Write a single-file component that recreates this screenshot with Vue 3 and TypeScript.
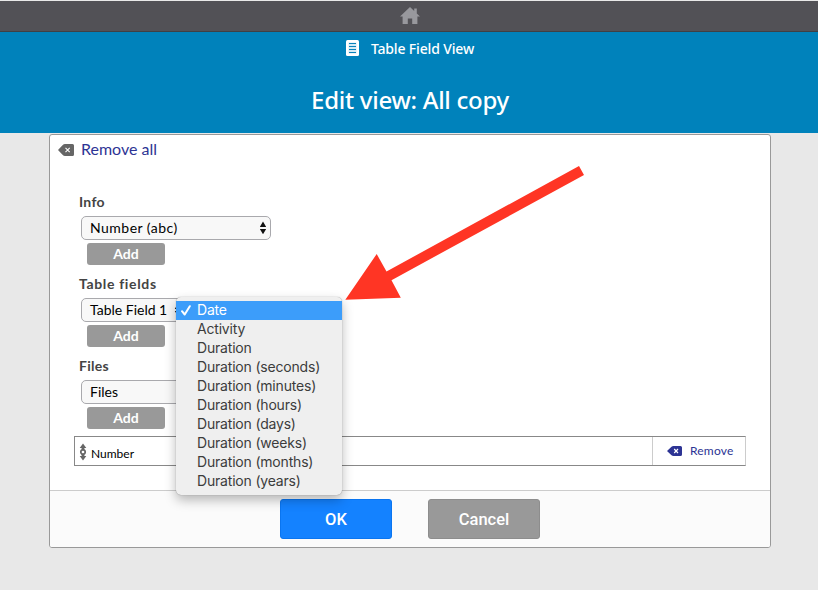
<script setup lang="ts">
interface FieldGroup {
  label: string
  value: string
  cls: string
}

const groups: FieldGroup[] = [
  { label: 'Info', value: 'Number (abc)', cls: 'info' },
  { label: 'Table fields', value: 'Table Field 1', cls: 'table' },
  { label: 'Files', value: 'Files', cls: 'files' },
]

const options: string[] = [
  'Date',
  'Activity',
  'Duration',
  'Duration (seconds)',
  'Duration (minutes)',
  'Duration (hours)',
  'Duration (days)',
  'Duration (weeks)',
  'Duration (months)',
  'Duration (years)',
]
const selected = 'Date'
</script>

<template>
  <div class="page">
    <div class="topbar">
      <svg class="home" width="20" height="18" viewBox="0 0 20 18">
        <path d="M10 0 0 9.6h2.6V17h5.2v-5.6h4.4V17h5.2V9.6H20l-3.2-3.1V1.6h-2.6v2.5z" fill="#98989d" />
      </svg>
    </div>
    <header class="header">
      <div class="app">
        <svg width="13" height="16" viewBox="0 0 13 16">
          <rect width="13" height="16" rx="1.5" fill="#fff" />
          <path d="M2.5 2.5h8v11h-8z" fill="#d5ebf5" />
          <path d="M3 3.5h7M3 6.5h7M3 9.5h7M3 12.5h7" stroke="#0982bb" stroke-width="1.2" />
        </svg>
        <span>Table Field View</span>
      </div>
      <h1>Edit view: All copy</h1>
    </header>

    <main class="dialog">
      <div class="content">
        <div class="remove-all">
          <svg width="16" height="12" viewBox="0 0 16 12">
            <path d="M0 6 5 .8Q5.7 0 7 0h7.500Q16 0 16 1.500v9Q16 12 14.500 12H7q-1.300 0-2-.8z" fill="#666" />
            <path d="m7.500 3.900 4.200 4.200m0-4.200L7.500 8.100" stroke="#fff" stroke-width="1.100" />
          </svg>
          <span>Remove all</span>
        </div>
        <section v-for="g in groups" :key="g.label" class="group" :class="g.cls">
          <div class="label"><span>{{ g.label }}</span></div>
          <div class="select">
            <span>{{ g.value }}</span>
            <svg width="8" height="14" viewBox="0 0 8 14">
              <path d="M4 .6 7.200 6H.8zM4 13.200.8 8h6.400z" fill="#111" />
            </svg>
          </div>
          <button class="add"><span>Add</span></button>
        </section>
        <div class="row">
          <div class="row-name">
            <svg width="8" height="18" viewBox="0 0 8 18">
              <path d="M4 .5 7.300 5H.7zM4 17.500.7 13h6.600z" fill="#666" />
              <circle cx="4" cy="9" r="2.200" fill="none" stroke="#666" stroke-width="1.700" />
              <path d="M4 4v3m0 4v3" stroke="#666" stroke-width="2.800" />
            </svg>
            <span>Number</span>
          </div>
          <div class="row-action">
            <svg width="15" height="10" viewBox="0 0 15 10">
              <path d="M0 5 4.500.7Q5.200 0 6.500 0h7Q15 0 15 1.500v7Q15 10 13.500 10h-7q-1.300 0-2-.7z" fill="#2d3494" />
              <path d="m7.200 3 3.800 4m0-4L7.200 7" stroke="#fff" stroke-width="1.200" />
            </svg>
            <span>Remove</span>
          </div>
        </div>
      </div>
      <footer class="footer">
        <button class="ok"><span>OK</span></button>
        <button class="cancel"><span>Cancel</span></button>
      </footer>
    </main>

    <ul class="menu">
      <li v-for="o in options" :key="o" :class="{ active: o === selected }">
        <svg v-if="o === selected" class="check" width="10" height="11" viewBox="0 0 10 11">
          <path d="m1 6.200 2.700 3.300L8.800 1.200" fill="none" stroke="#fff" stroke-width="2" stroke-linecap="round" stroke-linejoin="round" />
        </svg>
        <span>{{ o }}</span>
      </li>
    </ul>

    <svg class="arrow" width="240" height="136" viewBox="345 165 240 136">
      <path d="M345.300 299.800 376.700 254l9.800 17.500L579 166l5 9-192.500 105.200 9.300 17.600z" fill="#ff3524" />
    </svg>
  </div>
</template>

<style>
body {
  margin: 0;
}
</style>

<style scoped>
.page {
  position: relative;
  box-sizing: border-box;
  width: 818px;
  height: 590px;
  overflow: hidden;
  background: #e8e8e8;
  font-family: Lato, sans-serif;
}
.page * {
  box-sizing: border-box;
}
svg {
  display: block;
  flex: none;
}
span {
  white-space: nowrap;
}
.topbar {
  display: flex;
  justify-content: center;
  height: 32px;
  padding-top: 6px;
  padding-left: 2px;
  border-top: 1px solid #e9e9e9;
  border-bottom: 1px solid #3f4045;
  background: #525156;
}
.header {
  display: flex;
  flex-direction: column;
  align-items: center;
  height: 101px;
  padding-top: 6px;
  background: #0082bb;
  color: #fff;
  font-family: "Noto Sans", sans-serif;
}
.app {
  display: flex;
  align-items: center;
  gap: 12px;
  height: 20px;
  padding-left: 2px;
  font-size: 14px;
  font-weight: 500;
  letter-spacing: -0.15px;
}
h1 {
  margin: 25px 0 0 2px;
  font-size: 24px;
  line-height: 34px;
  font-weight: 500;
  letter-spacing: -0.28px;
}
.dialog {
  display: flex;
  flex-direction: column;
  width: 722px;
  height: 414px;
  margin: 1px 0 0 49px;
  border: 1px solid #999;
  border-radius: 3px;
  background: #fff;
  overflow: hidden;
}
.content {
  height: 355px;
  padding-left: 24px;
}
.content span {
  padding-bottom: 2px;
}
.remove-all {
  display: flex;
  align-items: center;
  gap: 7px;
  height: 30px;
  margin-left: -16px;
  color: #2d3494;
  font-size: 16px;
}
.remove-all span {
  margin-top: -1px;
}
.group {
  height: 82px;
  padding-left: 5px;
}
.info {
  margin-top: 27px;
}
.label {
  height: 24px;
  line-height: 19px;
  color: #444;
  font-size: 14px;
  font-weight: 700;
  letter-spacing: 0.3px;
}
.table .label {
  letter-spacing: 0.65px;
}
.select {
  display: flex;
  align-items: center;
  justify-content: space-between;
  width: 190px;
  height: 24px;
  margin-left: 2px;
  padding: 0 3px 0 8px;
  border: 1px solid #a9a9ad;
  border-radius: 5px;
  background: #f8f8f8;
  color: #000;
  font-size: 14px;
}
.info .select {
  letter-spacing: 0.48px;
}
.table .select {
  width: 105px;
}
button {
  display: flex;
  align-items: center;
  justify-content: center;
  padding: 0;
  border: 0;
  color: #fff;
  font-family: inherit;
  font-weight: 700;
}
.add {
  width: 78px;
  height: 22px;
  margin: 3px 0 0 8px;
  border-radius: 3px;
  background: #999;
  font-size: 14px;
}
.row {
  display: flex;
  width: 672px;
  height: 30px;
  margin-top: -2px;
  border: 1px solid #888;
  border-right-color: #ccc;
  font-size: 12px;
}
.row-name {
  display: flex;
  align-items: center;
  gap: 4px;
  width: 577px;
  padding: 6px 0 0 4px;
}
.row-name svg {
  margin-top: -4px;
}
.row-name span {
  padding-bottom: 1px;
}
.row-action {
  display: flex;
  align-items: center;
  gap: 8px;
  flex: 1;
  padding-left: 14px;
  border-left: 1px solid #ccc;
  color: #2d3494;
}
.row-action span {
  padding-bottom: 2px;
  letter-spacing: 0.2px;
}
.footer {
  display: flex;
  justify-content: center;
  gap: 36px;
  flex: 1;
  padding-top: 8px;
  border-top: 1px solid #ccc;
  background: #fbfbfb;
}
.footer button {
  width: 112px;
  height: 40px;
  border: 1px solid #8d8d8d;
  border-radius: 3px;
  background: #999;
  font-family: Roboto, sans-serif;
  font-size: 16.5px;
  font-weight: 500;
}
.footer .ok {
  border-color: #0a75f0;
  background: #1482ff;
}
.menu {
  position: absolute;
  left: 176px;
  top: 297px;
  width: 166px;
  height: 198px;
  margin: 0;
  padding: 4px 0;
  border-radius: 5px;
  background: #efefef;
  box-shadow: 0 0 1px rgba(0, 0, 0, 0.45), 0 5px 12px rgba(0, 0, 0, 0.28);
  list-style: none;
  color: #3c3c3c;
  font-family: Inter, sans-serif;
  font-size: 14px;
  letter-spacing: -0.19px;
}
.menu li {
  display: flex;
  align-items: center;
  height: 19px;
  padding-left: 21px;
}
.menu span {
  padding-bottom: 2px;
}
.menu .active {
  padding-left: 5px;
  background: #3c9dfa;
  color: #fff;
}
.check {
  margin-right: 6px;
}
.arrow {
  position: absolute;
  left: 345px;
  top: 165px;
}
</style>
